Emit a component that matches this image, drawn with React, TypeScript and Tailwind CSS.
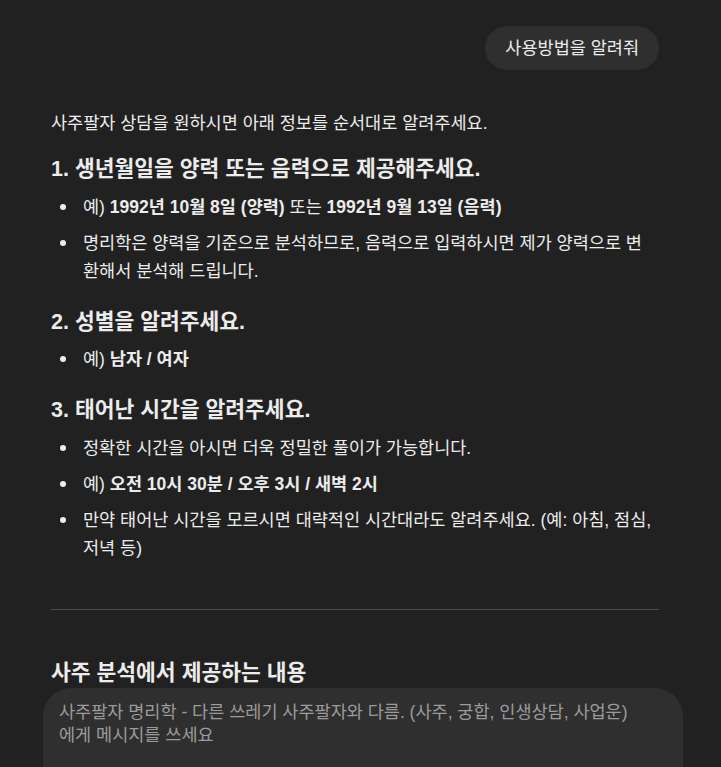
import React from "react";

const font = {
  fontFamily: '"Liberation Sans", "Noto Sans CJK KR", sans-serif',
};

function Li({ children, first }: { children: React.ReactNode; first?: boolean }) {
  return (
    <li className={`${first ? "mt-0" : "mt-2"} flex leading-7`}>
      <span className="flex h-7 w-[32px] shrink-0 items-center pl-[9px]">
        <span className="h-[6px] w-[6px] rounded-full bg-[#ececec]" />
      </span>
      <span className="min-w-0 flex-1">{children}</span>
    </li>
  );
}

export default function App() {
  return (
    <div
      className="relative h-[767px] w-[721px] overflow-hidden bg-[#212121] text-[17.5px] text-[#ececec]"
      style={font}
    >
      <div className="flex flex-col pl-[51px] pr-[62px] pt-[26px]">
        <div className="flex justify-end">
          <div className="flex h-[44px] items-center rounded-full bg-[#2f2f2f] px-5 leading-7">
            사용방법을 알려줘
          </div>
        </div>

        <p className="mt-[39px] leading-7">
          사주팔자 상담을 원하시면 아래 정보를 순서대로 알려주세요.
        </p>

        <h3 className="mt-[18px] text-[21.5px] font-bold leading-7">
          1. 생년월일을 양력 또는 음력으로 제공해주세요.
        </h3>
        <ul className="mr-[4px] mt-[10px]">
          <Li first>
            예) <b>1992년 10월 8일 (양력)</b> 또는 <b>1992년 9월 13일 (음력)</b>
          </Li>
          <Li>
            명리학은 양력을 기준으로 분석하므로, 음력으로 입력하시면 제가 양력으로 변환해서 분석해 드립니다.
          </Li>
        </ul>

        <h3 className="mt-[23px] text-[21.5px] font-bold leading-7">2. 성별을 알려주세요.</h3>
        <ul className="mr-[4px] mt-[9px]">
          <Li first>
            예) <b>남자 / 여자</b>
          </Li>
        </ul>

        <h3 className="mt-[23px] text-[21.5px] font-bold leading-7">3. 태어난 시간을 알려주세요.</h3>
        <ul className="mr-[4px] mt-[10px]">
          <Li first>정확한 시간을 아시면 더욱 정밀한 풀이가 가능합니다.</Li>
          <Li>
            예) <b>오전 10시 30분 / 오후 3시 / 새벽 2시</b>
          </Li>
          <Li>만약 태어난 시간을 모르시면 대략적인 시간대라도 알려주세요. (예: 아침, 점심, 저녁 등)</Li>
        </ul>

        <hr className="mt-[47px] border-t border-[#4d4d4d]" />

        <h3 className="mt-[49px] text-[21.5px] font-bold leading-7">사주 분석에서 제공하는 내용</h3>
      </div>

      <div className="absolute left-[43px] top-[688px] h-[120px] w-[640px] rounded-[28px] bg-[#2f2f2f] px-4 pt-[13px]">
        <div className="text-[17.5px] leading-[23px] text-[#9b9b9b]">
          사주팔자 명리학 - 다른 쓰레기 사주팔자와 다름. (사주, 궁합, 인생상담, 사업운)
          <br />
          에게 메시지를 쓰세요
        </div>
      </div>
    </div>
  );
}
